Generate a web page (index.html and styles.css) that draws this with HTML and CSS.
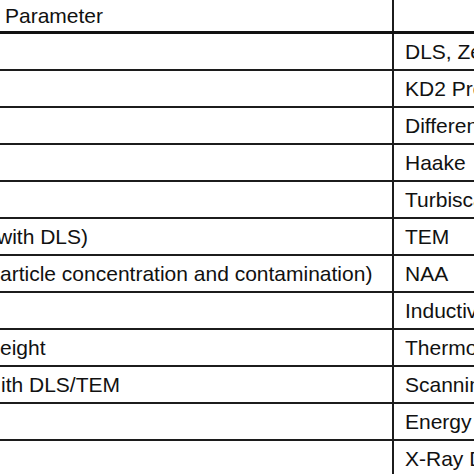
FILE: index.html
```html
<!DOCTYPE html>
<html>
<head>
<meta charset="utf-8">
<link rel="stylesheet" href="styles.css">
</head>
<body>
<div class="table">
  <div class="row head">
    <div class="cell left"><span class="pad">Parameter</span></div>
    <div class="cell right"></div>
  </div>
  <div class="row">
    <div class="cell left"></div>
    <div class="cell right">DLS, Zeta sizer</div>
  </div>
  <div class="row">
    <div class="cell left"></div>
    <div class="cell right">KD2 Pro</div>
  </div>
  <div class="row">
    <div class="cell left"></div>
    <div class="cell right">Differential scanning calorimetry</div>
  </div>
  <div class="row">
    <div class="cell left"></div>
    <div class="cell right">Haake</div>
  </div>
  <div class="row">
    <div class="cell left"></div>
    <div class="cell right">Turbiscan</div>
  </div>
  <div class="row">
    <div class="cell left"><span class="cut-w">with DLS)</span></div>
    <div class="cell right">TEM</div>
  </div>
  <div class="row">
    <div class="cell left"><span>article concentration and contamination)</span></div>
    <div class="cell right">NAA</div>
  </div>
  <div class="row">
    <div class="cell left"></div>
    <div class="cell right">Inductively coupled plasma</div>
  </div>
  <div class="row">
    <div class="cell left"><span>eight</span></div>
    <div class="cell right">Thermogravimetric analysis</div>
  </div>
  <div class="row">
    <div class="cell left"><span class="cut-i">ith DLS/TEM</span></div>
    <div class="cell right">Scanning electron microscopy</div>
  </div>
  <div class="row">
    <div class="cell left"></div>
    <div class="cell right">Energy dispersive X-ray</div>
  </div>
  <div class="row">
    <div class="cell left"></div>
    <div class="cell right">X-Ray Diffraction</div>
  </div>
</div>
</body>
</html>
```
FILE: styles.css
```css
html, body {
  margin: 0;
  padding: 0;
  background: #ffffff;
  overflow: hidden;
}
body {
  width: 474px;
  height: 474px;
  font-family: "Liberation Sans", Arial, sans-serif;
  font-size: 21px;
  color: #111111;
}
.table {
  width: 800px;
  display: flex;
  flex-direction: column;
}
.row {
  display: grid;
  grid-template-columns: 392px 1fr;
  height: 35px;
  border-bottom: 2px solid #1c1c1c;
}
.row.head {
  height: 31px;
  border-bottom: 3px solid #111111;
}
.cell {
  display: flex;
  align-items: center;
  white-space: nowrap;
  overflow: hidden;
}
.right {
  border-left: 2px solid #1c1c1c;
  padding-left: 11px;
}
.pad {
  margin-left: 5px;
}
.cut-w {
  margin-left: -3px;
}
.cut-i {
  margin-left: 1px;
}
```
